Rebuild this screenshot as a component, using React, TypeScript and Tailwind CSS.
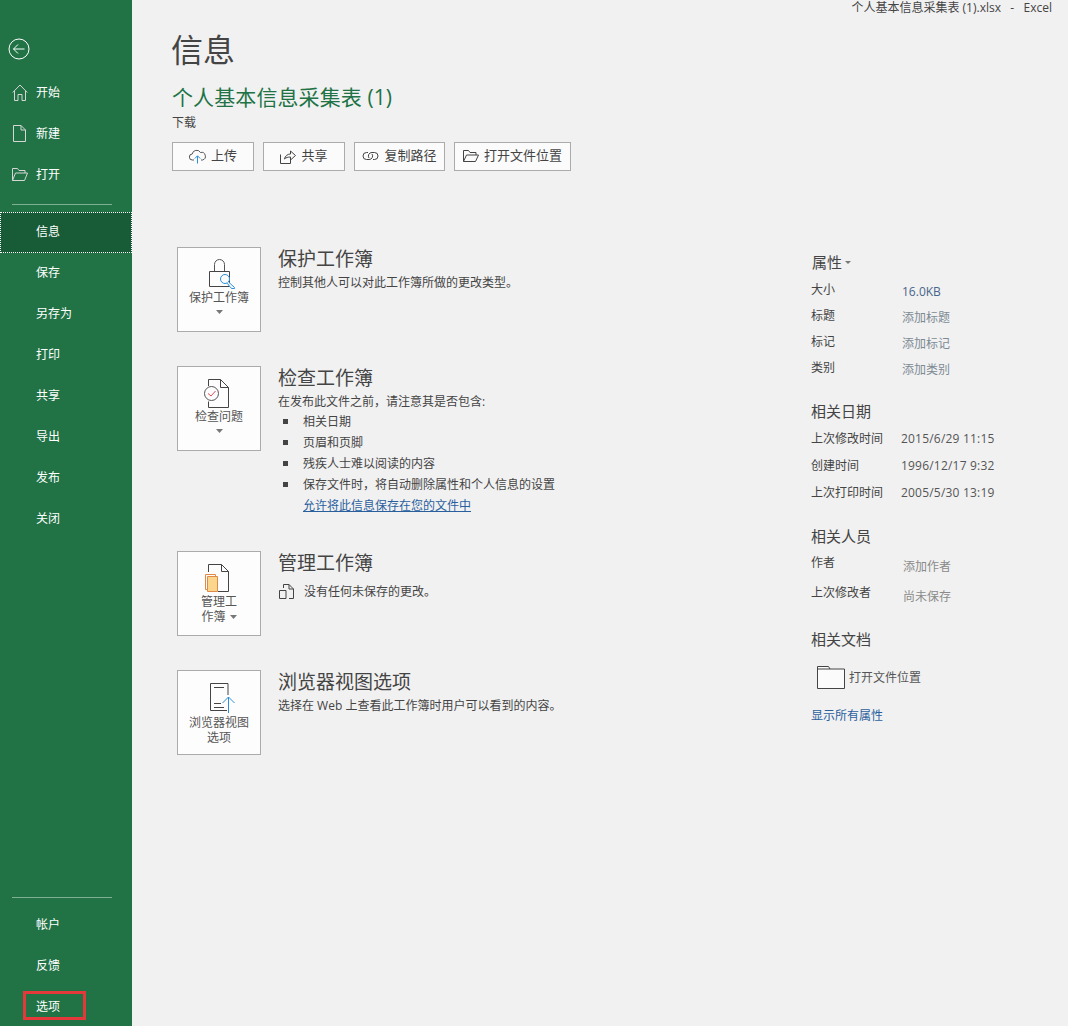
import type { ReactNode } from 'react'

const Caret = () => (
  <svg width="7" height="4" viewBox="0 0 7 4" className="inline-block">
    <path d="M0 0h7L3.500 4z" fill="#777" />
  </svg>
)

function NavItem({ label, icon, active }: { label: string; icon?: ReactNode; active?: boolean }) {
  return (
    <div
      className={
        'flex items-center h-[41px] ' +
        (active ? 'bg-[#185c37] border border-dotted border-white pb-[2px] -mb-px' : '')
      }
    >
      <div className={'flex justify-center pl-[3px] shrink-0 ' + (active ? 'w-[35px]' : 'w-[36px]')}>{icon}</div>
      <span className="text-[12px] text-white">{label}</span>
    </div>
  )
}

function TopButton({ label, width, icon }: { label: string; width: string; icon: ReactNode }) {
  return (
    <div className={'h-[29px] pb-px flex items-center justify-center gap-[5px] border border-[#ababab] bg-[#fbfbfb] text-[13px] text-[#444] ' + width}>
      {icon}
      <span>{label}</span>
    </div>
  )
}

function Section({ tile, title, children }: { tile: ReactNode; title: string; children?: ReactNode }) {
  return (
    <div className="flex">
      <div className="w-[84px] h-[85px] shrink-0 border border-[#ababab] bg-[#fdfdfd] flex flex-col items-center text-[12px] leading-[15px] text-[#555] text-center">
        {tile}
      </div>
      <div className="ml-[17px] text-[12px] text-[#444]">
        <div className="h-[24px] leading-[24px] text-[19px] text-[#444]">{title}</div>
        {children}
      </div>
    </div>
  )
}

function PropHeading({ children, className }: { children: ReactNode; className: string }) {
  return <div className={'flex items-center gap-[3px] text-[15px] text-[#444] ' + className}>{children}</div>
}

function PropRow({ label, value, valueClass, rowClass }: { label: string; value: string; valueClass: string; rowClass: string }) {
  return (
    <div className={'flex items-center text-[12px] ' + rowClass}>
      <span className="w-[90px] shrink-0 text-[#444]">{label}</span>
      <span className={valueClass}>{value}</span>
    </div>
  )
}

const bullets = ['相关日期', '页眉和页脚', '残疾人士难以阅读的内容', '保存文件时，将自动删除属性和个人信息的设置']

export default function App() {
  return (
    <div className="w-[1068px] h-[1026px] flex overflow-hidden bg-[#f1f1f1] font-['Open_Sans','Noto_Sans_CJK_SC',sans-serif]">
      <aside className="relative w-[132px] shrink-0 bg-[#217346] flex flex-col">
        <div className="h-[72px] pl-[8px] pt-[38px]">
          <svg width="22" height="22" viewBox="0 0 22 22" fill="none" stroke="#fff" strokeWidth="1">
            <circle cx="11" cy="11" r="10" />
            <path d="M5.500 11h11M10 6.500 5.500 11l4.500 4.500" />
          </svg>
        </div>
        <NavItem
          label="开始"
          icon={
            <svg width="16" height="17" viewBox="0 0 16 17" fill="none" stroke="#d6d6d6">
              <path d="M.7 8.500 8 1l7.300 7.500M2.500 7v9.500h3.500V10.500h4v6h3.500V7" />
            </svg>
          }
        />
        <NavItem
          label="新建"
          icon={
            <svg width="13" height="17" viewBox="0 0 13 17" fill="none" stroke="#d6d6d6">
              <path d="M.5.5h7.500l4.500 4.500v11.500H.5zM8 .5V5h4.500" />
            </svg>
          }
        />
        <NavItem
          label="打开"
          icon={
            <svg width="16" height="13" viewBox="0 0 16 13" fill="none" stroke="#d6d6d6">
              <path d="M.5 12.500V.5h5l1.500 2h6v2.500M.5 12.500h12l3-7.500H3.500z" />
            </svg>
          }
        />
        <div className="h-px w-[100px] ml-[12px] mt-[9px] mb-[7px] bg-[#7fb094]" />
        <NavItem label="信息" active />
        <NavItem label="保存" />
        <NavItem label="另存为" />
        <NavItem label="打印" />
        <NavItem label="共享" />
        <NavItem label="导出" />
        <NavItem label="发布" />
        <NavItem label="关闭" />
        <div className="mt-auto h-px w-[100px] ml-[12px] mb-[6px] bg-[#7fb094]" />
        <NavItem label="帐户" />
        <NavItem label="反馈" />
        <NavItem label="选项" />
        <div className="-mb-px" />
        <div className="absolute left-[23px] top-[991px] w-[63px] h-[29px] border-[3px] border-[#e5383b]" />
      </aside>

      <main className="flex-1 pl-[40px] text-[#444]">
        <div className="h-[16px] flex justify-end items-center pr-[16px] text-[12px] text-[#444] whitespace-pre">
          个人基本信息采集表 (1).xlsx{'   -   '}Excel
        </div>
        <div className="mt-[14px] h-[40px] leading-[40px] text-[32px] text-[#444] -ml-px">信息</div>
        <div className="mt-[12px] h-[30px] leading-[30px] text-[21px] text-[#217346] tracking-[0.1px]">个人基本信息采集表 (1)</div>
        <div className="mt-[3px] h-[16px] leading-[16px] text-[12px]">下载</div>
        <div className="mt-[11px] flex gap-[9px]">
          <TopButton
            label="上传"
            width="w-[82px]"
            icon={
              <svg width="17" height="15" viewBox="0 0 17 15" fill="none">
                <path d="M5 11H3.500a3 3 0 0 1-.3-6A4.500 4.500 0 0 1 11.500 3.500a3.500 3.500 0 0 1 2 7.500H12" stroke="#555" />
                <path d="M8.500 14.500V7M5.800 9.500l2.700-2.700 2.700 2.700" stroke="#2b8fd8" />
              </svg>
            }
          />
          <TopButton
            label="共享"
            width="w-[82px]"
            icon={
              <svg width="16" height="16" viewBox="0 0 16 16" fill="none" stroke="#444">
                <path d="M.5 6.500v9h10V12M4.500 11c.5-3 3-5 6-5V3l5 4.500-5 4.500V9c-2.500 0-4.500.5-6 2z" />
              </svg>
            }
          />
          <TopButton
            label="复制路径"
            width="w-[91px]"
            icon={
              <svg width="17" height="12" viewBox="0 0 17 12" fill="none" stroke="#444">
                <path d="M6 2.500H4.500a3.500 3.500 0 0 0 0 7H7a3.500 3.500 0 0 0 3-5.500" />
                <path d="M11 9.500h1.500a3.500 3.500 0 0 0 0-7H10a3.500 3.500 0 0 0-3 5.500" />
              </svg>
            }
          />
          <TopButton
            label="打开文件位置"
            width="w-[117px]"
            icon={
              <svg width="16" height="12" viewBox="0 0 16 12" fill="none" stroke="#444">
                <path d="M.5 11.500V.5h5l1.500 2h6V5M.5 11.500h12l3-6.500H3.500z" />
              </svg>
            }
          />
        </div>

        <div className="mt-[76px] flex">
          <div className="w-[639px] pl-[5px] flex flex-col gap-[34px] shrink-0">
            <Section
              title="保护工作簿"
              tile={
                <>
                  <div className="h-[41px] flex items-end ml-[6px]">
                    <svg width="26" height="30" viewBox="0 0 26 30" fill="none">
                      <path d="M5.500 12V5.500a5 5 0 0 1 10 0V12" stroke="#555" />
                      <path d="M.5 12.500h20v15H.5z" stroke="#444" fill="#fdfdfd" />
                      <circle cx="16" cy="20" r="4.500" stroke="#2b8fd8" fill="#fdfdfd" />
                      <path d="m19.500 23 6 5.500v1h-3l-1.500-2-1-.5-.5-1.500-2-1.500" stroke="#2b8fd8" fill="#fdfdfd" />
                    </svg>
                  </div>
                  <div className="mt-[1px]">保护工作簿</div>
                  <div className="mt-[5px] leading-[4px] h-[4px] flex"><Caret /></div>
                </>
              }
            >
              <div className="mt-[1px] leading-[21px]">控制其他人可以对此工作簿所做的更改类型。</div>
            </Section>

            <Section
              title="检查工作簿"
              tile={
                <>
                  <div className="h-[41px] flex items-end mr-[5px]">
                    <svg width="25" height="29" viewBox="0 0 25 29" fill="none">
                      <path d="M4.500 7V.5h12l8 8v20h-20v-6" stroke="#444" />
                      <path d="M16.500.5v8h8" stroke="#444" />
                      <circle cx="7.500" cy="14.500" r="7" stroke="#555" fill="#fdfdfd" />
                      <path d="m4 14.500 3 2.500 4.500-5" stroke="#e04a55" />
                    </svg>
                  </div>
                  <div className="mt-[1px]">检查问题</div>
                  <div className="mt-[5px] leading-[4px] h-[4px] flex"><Caret /></div>
                </>
              }
            >
              <div className="mt-[1px] leading-[21px]">在发布此文件之前，请注意其是否包含:</div>
              {bullets.map((b, i) => (
                <div key={b} className={'h-[21px] flex items-center ' + (i === 0 ? '-mt-px' : '')}>
                  <span className="ml-[5px] w-[5px] h-[5px] bg-[#444] shrink-0" />
                  <span className="ml-[15px]">{b}</span>
                </div>
              ))}
              <div className="h-[22px] leading-[21px] pl-[25px] text-[#2a5f9e] underline">允许将此信息保存在您的文件中</div>
            </Section>

            <Section
              title="管理工作簿"
              tile={
                <>
                  <div className="h-[41px] flex items-end mr-[4px]">
                    <svg width="24" height="29" viewBox="0 0 24 29" fill="none">
                      <path d="M3.500 8V.5h13l7 7v20H13" stroke="#444" />
                      <path d="M16.500.5v7h7" stroke="#444" />
                      <path d="M.5 10.500h10v15H.5z" stroke="#e08a45" />
                      <path d="M2.500 12.500h10v15h-10z" stroke="#e08a45" fill="#fbd68c" />
                    </svg>
                  </div>
                  <div className="mt-[1px]">管理工</div>
                  <div className="flex items-center gap-[4px]">作簿 <Caret /></div>
                </>
              }
            >
              <div className="mt-[6px] flex items-center h-[21px]">
                <svg width="15" height="15" viewBox="0 0 15 15" fill="none" stroke="#444" className="ml-[1px]">
                  <path d="M4.500 4V.5h5.500l4.500 4.500v9.500H10M10 .5V5h4.500" />
                  <path d="M.5 6.500H7v8H.5z" />
                </svg>
                <span className="ml-[10px]">没有任何未保存的更改。</span>
              </div>
            </Section>

            <Section
              title="浏览器视图选项"
              tile={
                <>
                  <div className="h-[42px] flex items-end ml-[7px]">
                    <svg width="25" height="30" viewBox="0 0 25 30" fill="none">
                      <path d="M18 12V.5H.5v27H17" stroke="#444" />
                      <path d="M4 4.500h10M4 20.500h7M4 24.500h10" stroke="#444" />
                      <path d="M18.500 30V14M12.500 20 18.500 14l6 6" stroke="#2b8fd8" />
                    </svg>
                  </div>
                  <div className="mt-[2px]">浏览器视图</div>
                  <div>选项</div>
                </>
              }
            >
              <div className="mt-[1px] leading-[21px]">选择在 Web 上查看此工作簿时用户可以看到的内容。</div>
            </Section>
          </div>

          <div className="flex-1">
            <PropHeading className="h-[30px] pl-px">
              属性
              <svg width="6" height="3" viewBox="0 0 6 3">
                <path d="M0 0h6L3 3z" fill="#777" />
              </svg>
            </PropHeading>
            <PropRow label="大小" value="16.0KB" valueClass="text-[#47668a] pt-[3px] pl-px" rowClass="h-[26px]" />
            <PropRow label="标题" value="添加标题" valueClass="text-[#7d8a94] pt-[3px] pl-px" rowClass="h-[26px]" />
            <PropRow label="标记" value="添加标记" valueClass="text-[#7d8a94] pt-[3px] pl-px" rowClass="h-[26px]" />
            <PropRow label="类别" value="添加类别" valueClass="text-[#7d8a94] pt-[3px] pl-px" rowClass="h-[26px]" />

            <PropHeading className="mt-[16px] h-[28px]">相关日期</PropHeading>
            <PropRow label="上次修改时间" value="2015/6/29 11:15" valueClass="text-[#555] tracking-[0.2px]" rowClass="h-[27px]" />
            <PropRow label="创建时间" value="1996/12/17 9:32" valueClass="text-[#555] tracking-[0.2px]" rowClass="h-[27px]" />
            <PropRow label="上次打印时间" value="2005/5/30 13:19" valueClass="text-[#555] tracking-[0.2px]" rowClass="h-[27px]" />

            <PropHeading className="mt-[18px] h-[24px]">相关人员</PropHeading>
            <PropRow label="作者" value="添加作者" valueClass="text-[#8a8a8a] pt-[8px] pl-[2px]" rowClass="h-[30px]" />
            <PropRow label="上次修改者" value="尚未保存" valueClass="text-[#8a8a8a] pt-[8px] pl-[2px]" rowClass="h-[30px]" />

            <PropHeading className="mt-[17px] h-[28px]">相关文档</PropHeading>
            <div className="mt-[13px] h-[23px] flex items-center pl-[6px] text-[12px] text-[#555]">
              <svg width="28" height="23" viewBox="0 0 28 23" fill="#fbfbfb" stroke="#444">
                <path d="M.5 22.500V.5h11l1.500 2.500h14.500v19.500z" />
                <path d="M.5 3h12.500" fill="none" />
              </svg>
              <span className="ml-[4px]">打开文件位置</span>
            </div>
            <div className="mt-[19px] h-[16px] leading-[16px] text-[12px] text-[#2a5f9e]">显示所有属性</div>
          </div>
        </div>
      </main>
    </div>
  )
}
